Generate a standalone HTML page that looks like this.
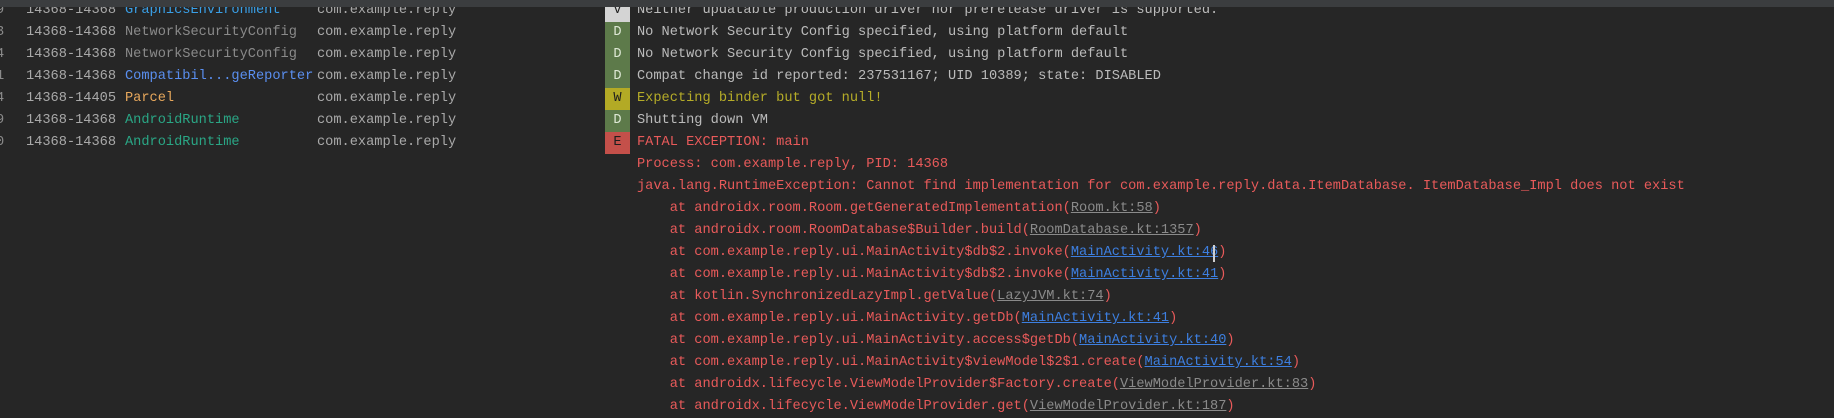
<!DOCTYPE html>
<html><head><meta charset="utf-8"><style>
html,body{margin:0;padding:0;width:1834px;height:418px;overflow:hidden;background:#262626;}
body{position:relative;font-family:"Liberation Mono",monospace;font-size:13.65px;color:#bbbbbb;}
.bar{position:absolute;left:0;top:0;width:1834px;height:7px;background:#3b3d3f;z-index:5}
.r{position:absolute;left:0;height:22px;line-height:22px;white-space:pre;width:1834px}
.ln{position:absolute;left:-4px;color:#8a8a8a}
.pid{position:absolute;left:26px;color:#a9a9a9}
.tag{position:absolute;left:125px}
.pk{position:absolute;left:317px;color:#a9a9a9}
.b{position:absolute;left:605px;width:25px;height:22px;text-align:center}
.m{position:absolute;left:637px}
.V{background:#d4d4d4;color:#1e1e1e}
.D{background:#5d7a4a;color:#dde8d4}
.W{background:#b3aa25;color:#1e1e1e}
.E{background:#c4504a;color:#1e1e1e}
.red{color:#e85a5a}
.lb{color:#3d7fe0;text-decoration:underline}
.lg{color:#8a8a8a;text-decoration:underline}
</style></head><body>
<div class="bar"></div>
<div class="r" style="top:0"><span class="ln">9</span><span class="pid">14368-14368</span><span class="tag" style="color:#3a9fe6">GraphicsEnvironment</span><span class="pk">com.example.reply</span><span class="b V">V</span><span class="m">Neither updatable production driver nor prerelease driver is supported.</span></div>
<div class="r" style="top:22px"><span class="ln">3</span><span class="pid">14368-14368</span><span class="tag" style="color:#8a8a8a">NetworkSecurityConfig</span><span class="pk">com.example.reply</span><span class="b D">D</span><span class="m">No Network Security Config specified, using platform default</span></div>
<div class="r" style="top:44px"><span class="ln">4</span><span class="pid">14368-14368</span><span class="tag" style="color:#8a8a8a">NetworkSecurityConfig</span><span class="pk">com.example.reply</span><span class="b D">D</span><span class="m">No Network Security Config specified, using platform default</span></div>
<div class="r" style="top:66px"><span class="ln">1</span><span class="pid">14368-14368</span><span class="tag" style="color:#5a8ff0">Compatibil...geReporter</span><span class="pk">com.example.reply</span><span class="b D">D</span><span class="m">Compat change id reported: 237531167; UID 10389; state: DISABLED</span></div>
<div class="r" style="top:88px"><span class="ln">4</span><span class="pid">14368-14405</span><span class="tag" style="color:#e8a85c">Parcel</span><span class="pk">com.example.reply</span><span class="b W">W</span><span class="m" style="color:#b5ac28">Expecting binder but got null!</span></div>
<div class="r" style="top:110px"><span class="ln">9</span><span class="pid">14368-14368</span><span class="tag" style="color:#2aa685">AndroidRuntime</span><span class="pk">com.example.reply</span><span class="b D">D</span><span class="m">Shutting down VM</span></div>
<div class="r" style="top:132px"><span class="ln">0</span><span class="pid">14368-14368</span><span class="tag" style="color:#2aa685">AndroidRuntime</span><span class="pk">com.example.reply</span><span class="b E">E</span><span class="m red">FATAL EXCEPTION: main</span></div>
<div class="r" style="top:154px"><span class="m red">Process: com.example.reply, PID: 14368</span></div>
<div class="r" style="top:176px"><span class="m red">java.lang.RuntimeException: Cannot find implementation for com.example.reply.data.ItemDatabase. ItemDatabase_Impl does not exist</span></div>
<div class="r" style="top:198px"><span class="m red">    at androidx.room.Room.getGeneratedImplementation(<span class="lg">Room.kt:58</span>)</span></div>
<div class="r" style="top:220px"><span class="m red">    at androidx.room.RoomDatabase$Builder.build(<span class="lg">RoomDatabase.kt:1357</span>)</span></div>
<div class="r" style="top:242px"><span class="m red">    at com.example.reply.ui.MainActivity$db$2.invoke(<span class="lb">MainActivity.kt:46</span>)</span><span style="position:absolute;left:1213px;top:3px;width:2px;height:17px;background:#cfcfcf"></span></div>
<div class="r" style="top:264px"><span class="m red">    at com.example.reply.ui.MainActivity$db$2.invoke(<span class="lb">MainActivity.kt:41</span>)</span></div>
<div class="r" style="top:286px"><span class="m red">    at kotlin.SynchronizedLazyImpl.getValue(<span class="lg">LazyJVM.kt:74</span>)</span></div>
<div class="r" style="top:308px"><span class="m red">    at com.example.reply.ui.MainActivity.getDb(<span class="lb">MainActivity.kt:41</span>)</span></div>
<div class="r" style="top:330px"><span class="m red">    at com.example.reply.ui.MainActivity.access$getDb(<span class="lb">MainActivity.kt:40</span>)</span></div>
<div class="r" style="top:352px"><span class="m red">    at com.example.reply.ui.MainActivity$viewModel$2$1.create(<span class="lb">MainActivity.kt:54</span>)</span></div>
<div class="r" style="top:374px"><span class="m red">    at androidx.lifecycle.ViewModelProvider$Factory.create(<span class="lg">ViewModelProvider.kt:83</span>)</span></div>
<div class="r" style="top:396px"><span class="m red">    at androidx.lifecycle.ViewModelProvider.get(<span class="lg">ViewModelProvider.kt:187</span>)</span></div>
</body></html>
